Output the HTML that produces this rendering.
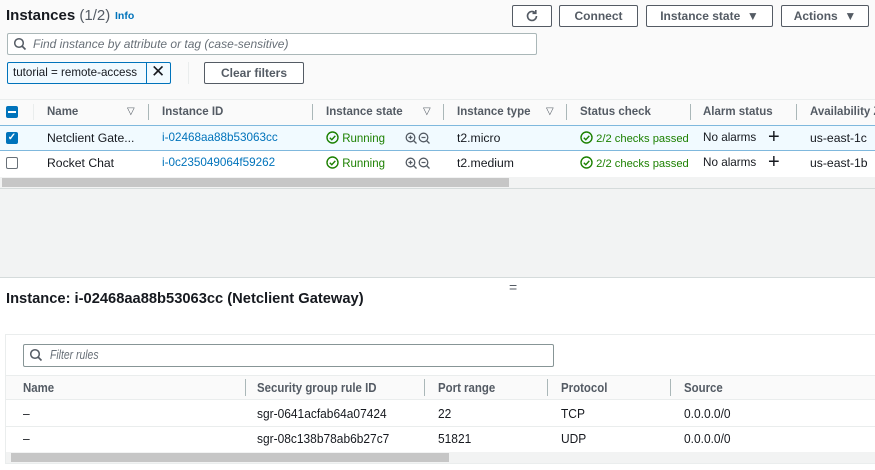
<!DOCTYPE html>
<html><head><style>
*{box-sizing:border-box;margin:0;padding:0}
body{width:875px;height:470px;overflow:hidden;background:#fff;font-family:"Liberation Sans",sans-serif;color:#16191f;position:relative;font-size:12.2px}
.a{position:absolute;white-space:nowrap}
.btn{position:absolute;border:1px solid #545b64;border-radius:2px;background:#fff;font-weight:bold;color:#545b64;font-size:12px;text-align:center;line-height:20px}
.hd{font-weight:bold;color:#545b64;font-size:11.5px}
.dv{position:absolute;width:1px;background:#aab7b8}
.lnk{color:#0073bb}
.grn{color:#1d8102;font-size:11.5px}
.n{font-size:13px;transform:scaleX(0.92);transform-origin:0 0}
.n.hd{font-size:13px;transform:scaleX(0.88)}
</style></head><body>
<div class="a" style="left:0;top:0;width:875px;height:190px;background:#fafafa"></div>
<div class="a" style="left:6px;top:7px;font-size:15px;font-weight:bold">Instances <span style="font-weight:normal;color:#545b64">(1/2)</span></div>
<div class="a lnk" style="left:115px;top:10px;font-size:10.5px;font-weight:bold">Info</div>
<div class="btn" style="left:512px;top:5px;width:40px;height:22px"><svg width="14" height="14" viewBox="0 0 14 14" style="margin-top:3px"><path d="M11.5 7a4.5 4.5 0 1 1-1.3-3.2" fill="none" stroke="#545b64" stroke-width="1.6"/><path d="M10.8 1v3.3H7.5" fill="none" stroke="#545b64" stroke-width="1.6"/></svg></div>
<div class="btn" style="left:559px;top:5px;width:79px;height:22px">Connect</div>
<div class="btn" style="left:646px;top:5px;width:127px;height:22px">Instance state &nbsp;▼</div>
<div class="btn" style="left:781px;top:5px;width:88px;height:22px">Actions &nbsp;▼</div>
<div class="a" style="left:7px;top:33px;width:530px;height:22px;border:1px solid #aab7b8;border-radius:2px;background:#fff"></div>
<svg class="a" style="left:13px;top:37px" width="14" height="14" viewBox="0 0 14 14"><circle cx="6" cy="6" r="4.3" fill="none" stroke="#545b64" stroke-width="1.5"/><path d="M9 9l3.5 3.5" stroke="#545b64" stroke-width="1.6"/></svg>
<div class="a" style="left:33px;top:37px;font-style:italic;color:#687078;font-size:12px">Find instance by attribute or tag (case-sensitive)</div>
<div class="a" style="left:7px;top:62px;width:164px;height:22px;border:1px solid #0073bb;border-radius:2px;background:#f1faff"></div>
<div class="a" style="left:146px;top:62px;width:1px;height:22px;background:#0073bb"></div>
<div class="a" style="left:13px;top:66px;font-size:11.6px">tutorial = remote-access</div>
<div class="a" style="left:151px;top:62px;font-size:17px;color:#16191f">✕</div>
<div class="a" style="left:188px;top:62px;width:1px;height:22px;background:#eaeded"></div>
<div class="btn" style="left:204px;top:62px;width:100px;height:22px">Clear filters</div>
<div class="a" style="left:0;top:99px;width:875px;height:1px;background:#eaeded"></div>
<div class="a" style="left:6px;top:106px;width:12px;height:12px;background:#0073bb;border-radius:2px"><div style="margin:5px 2px;height:2px;background:#fff"></div></div>
<div class="dv" style="left:33px;top:104px;height:16px;background:#eaeded"></div>
<div class="a hd" style="left:47px;top:106px">Name</div><div class="a" style="left:127px;top:106px;font-size:10px;color:#545b64">▽</div>
<div class="dv" style="left:148px;top:104px;height:16px"></div>
<div class="a hd" style="left:162px;top:106px">Instance ID</div>
<div class="dv" style="left:312px;top:104px;height:16px"></div>
<div class="a hd" style="left:326px;top:106px">Instance state</div><div class="a" style="left:423px;top:106px;font-size:10px;color:#545b64">▽</div>
<div class="dv" style="left:443px;top:104px;height:16px"></div>
<div class="a hd" style="left:457px;top:106px">Instance type</div><div class="a" style="left:546px;top:106px;font-size:10px;color:#545b64">▽</div>
<div class="dv" style="left:566px;top:104px;height:16px"></div>
<div class="a hd" style="left:580px;top:106px">Status check</div>
<div class="dv" style="left:690px;top:104px;height:16px"></div>
<div class="a hd" style="left:703px;top:106px">Alarm status</div>
<div class="dv" style="left:796px;top:104px;height:16px"></div>
<div class="a hd" style="left:810px;top:106px">Availability Z</div>
<div class="a" style="left:0;top:125px;width:875px;height:26px;background:#f1faff;border-top:1px solid #7fb8dd;border-bottom:1px solid #7fb8dd"></div>
<div class="a" style="left:0;top:151px;width:875px;height:26px;background:#fff"></div>
<div class="a" style="left:6px;top:132px;width:12px;height:12px;background:#0073bb;border-radius:2px;color:#fff;font-size:10px;line-height:12px;text-align:center;font-weight:bold">✓</div>
<div class="a" style="left:6px;top:157px;width:12px;height:12px;border:1px solid #687078;border-radius:2px;background:#fff"></div>
<div class="a" style="left:47px;top:131px">Netclient Gate...</div>
<div class="a" style="left:47px;top:156px">Rocket Chat</div>
<div class="a lnk" style="left:162px;top:131px;font-size:11.7px">i-02468aa88b53063cc</div>
<div class="a lnk" style="left:162px;top:156px;font-size:11.7px">i-0c235049064f59262</div>
<div class="a grn" style="left:326px;top:131px"><svg width="13" height="13" viewBox="0 0 13 13" style="vertical-align:-2px"><circle cx="6.5" cy="6.5" r="5.5" fill="none" stroke="#1d8102" stroke-width="1.4"/><path d="M3.8 6.7l2 2 3.5-3.8" fill="none" stroke="#1d8102" stroke-width="1.4"/></svg> Running</div>
<div class="a grn" style="left:326px;top:156px"><svg width="13" height="13" viewBox="0 0 13 13" style="vertical-align:-2px"><circle cx="6.5" cy="6.5" r="5.5" fill="none" stroke="#1d8102" stroke-width="1.4"/><path d="M3.8 6.7l2 2 3.5-3.8" fill="none" stroke="#1d8102" stroke-width="1.4"/></svg> Running</div>
<svg class="a" style="left:405px;top:132px" width="26" height="13" viewBox="0 0 26 13"><circle cx="5.5" cy="5.5" r="4.3" fill="none" stroke="#545b64" stroke-width="1.3"/><path d="M8.5 8.5l3 3M3.5 5.5h4M5.5 3.5v4" stroke="#545b64" stroke-width="1.3"/><circle cx="18.5" cy="5.5" r="4.3" fill="none" stroke="#545b64" stroke-width="1.3"/><path d="M21.5 8.5l3 3M16.5 5.5h4" stroke="#545b64" stroke-width="1.3"/></svg>
<svg class="a" style="left:405px;top:157px" width="26" height="13" viewBox="0 0 26 13"><circle cx="5.5" cy="5.5" r="4.3" fill="none" stroke="#545b64" stroke-width="1.3"/><path d="M8.5 8.5l3 3M3.5 5.5h4M5.5 3.5v4" stroke="#545b64" stroke-width="1.3"/><circle cx="18.5" cy="5.5" r="4.3" fill="none" stroke="#545b64" stroke-width="1.3"/><path d="M21.5 8.5l3 3M16.5 5.5h4" stroke="#545b64" stroke-width="1.3"/></svg>
<div class="a" style="left:457px;top:131px">t2.micro</div>
<div class="a" style="left:457px;top:156px">t2.medium</div>
<div class="a grn" style="left:580px;top:131px;font-size:11.2px"><svg width="13" height="13" viewBox="0 0 13 13" style="vertical-align:-2px"><circle cx="6.5" cy="6.5" r="5.5" fill="none" stroke="#1d8102" stroke-width="1.4"/><path d="M3.8 6.7l2 2 3.5-3.8" fill="none" stroke="#1d8102" stroke-width="1.4"/></svg> 2/2 checks passed</div>
<div class="a grn" style="left:580px;top:156px;font-size:11.2px"><svg width="13" height="13" viewBox="0 0 13 13" style="vertical-align:-2px"><circle cx="6.5" cy="6.5" r="5.5" fill="none" stroke="#1d8102" stroke-width="1.4"/><path d="M3.8 6.7l2 2 3.5-3.8" fill="none" stroke="#1d8102" stroke-width="1.4"/></svg> 2/2 checks passed</div>
<div class="a" style="left:703px;top:131px;font-size:11.7px">No alarms</div>
<div class="a" style="left:703px;top:156px;font-size:11.7px">No alarms</div>
<div class="a" style="left:768px;top:126px;font-size:20px">+</div>
<div class="a" style="left:768px;top:151px;font-size:20px">+</div>
<div class="a" style="left:810px;top:131px">us-east-1c</div>
<div class="a" style="left:810px;top:156px">us-east-1b</div>
<div class="a" style="left:0;top:177px;width:875px;height:11px;background:#f2f3f3"></div>
<div class="a" style="left:2px;top:178px;width:507px;height:9px;background:#c6c6c6"></div>
<div class="a" style="left:0;top:188px;width:875px;height:89px;background:#f2f3f3;border-top:1px solid #d5dbdb"></div>
<div class="a" style="left:0;top:277px;width:875px;height:1px;background:#d5dbdb"></div>
<div class="a" style="left:509px;top:279px;font-size:14px;color:#545b64">=</div>
<div class="a" style="left:6px;top:291px;font-size:14.7px;font-weight:bold">Instance: i-02468aa88b53063cc (Netclient Gateway)</div>
<div class="a" style="left:5px;top:334px;width:880px;height:130px;border:1px solid #eaeded;background:#fff"></div>
<div class="a" style="left:23px;top:344px;width:531px;height:23px;border:1px solid #879596;border-radius:2px"></div>
<svg class="a" style="left:29px;top:348px" width="14" height="14" viewBox="0 0 14 14"><circle cx="6" cy="6" r="4.3" fill="none" stroke="#545b64" stroke-width="1.5"/><path d="M9 9l3.5 3.5" stroke="#545b64" stroke-width="1.6"/></svg>
<div class="a n" style="left:50px;top:347px;font-style:italic;color:#687078;transform:scaleX(0.8)">Filter rules</div>
<div class="a" style="left:6px;top:375px;width:869px;height:25px;background:#fafafa;border-top:1px solid #eaeded;border-bottom:1px solid #eaeded"></div>
<div class="a n hd" style="left:23px;top:380px">Name</div>
<div class="dv" style="left:245px;top:379px;height:17px"></div>
<div class="a n hd" style="left:257px;top:380px">Security group rule ID</div>
<div class="dv" style="left:424px;top:379px;height:17px"></div>
<div class="a n hd" style="left:438px;top:380px">Port range</div>
<div class="dv" style="left:547px;top:379px;height:17px"></div>
<div class="a n hd" style="left:561px;top:380px">Protocol</div>
<div class="dv" style="left:670px;top:379px;height:17px"></div>
<div class="a n hd" style="left:684px;top:380px">Source</div>
<div class="a" style="left:6px;top:426px;width:869px;height:1px;background:#eaeded"></div>
<div class="a n" style="left:23px;top:406px">–</div><div class="a n" style="left:257px;top:406px">sgr-0641acfab64a07424</div><div class="a n" style="left:438px;top:406px">22</div><div class="a n" style="left:561px;top:406px">TCP</div><div class="a n" style="left:684px;top:406px">0.0.0.0/0</div>
<div class="a n" style="left:23px;top:431px">–</div><div class="a n" style="left:257px;top:431px">sgr-08c138b78ab6b27c7</div><div class="a n" style="left:438px;top:431px">51821</div><div class="a n" style="left:561px;top:431px">UDP</div><div class="a n" style="left:684px;top:431px">0.0.0.0/0</div>
<div class="a" style="left:6px;top:452px;width:869px;height:11px;background:#f2f3f3"></div>
<div class="a" style="left:11px;top:453px;width:438px;height:9px;background:#c6c6c6"></div>
</body></html>
